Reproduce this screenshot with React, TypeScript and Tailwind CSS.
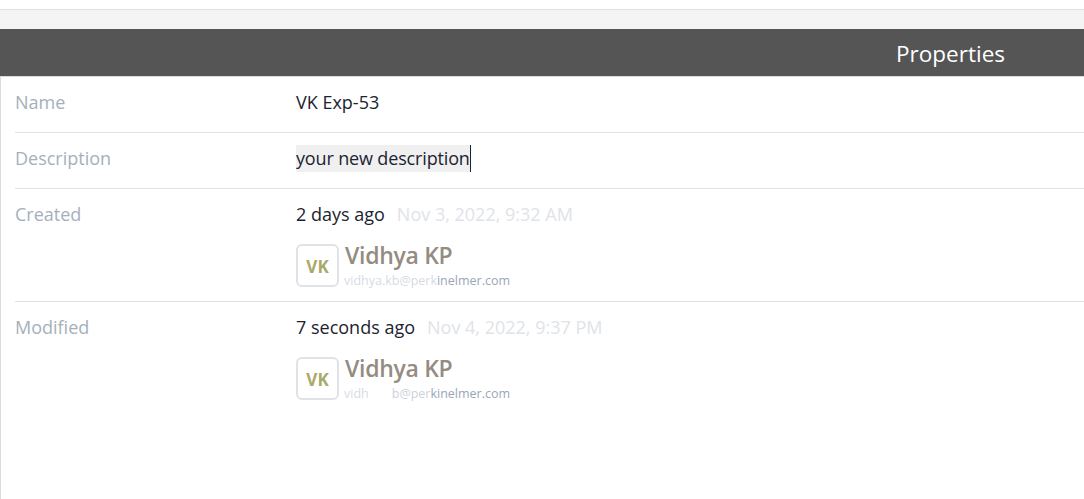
const sans = "font-['Open_Sans','Noto_Sans',sans-serif]";

function UserChip({ email }: { email: React.ReactNode }) {
  return (
    <div className="mt-[17px] flex">
      <div className="flex h-[43px] w-[43px] items-center justify-center rounded-[6px] border-2 border-[#dfe2e6] pt-[3px] text-[17px] font-bold text-[#a9a968]">
        VK
      </div>
      <div className="-mt-[2px] ml-[5px]">
        <div className="pl-[1px] text-[23px] leading-[26px] font-semibold tracking-[-0.3px] text-[#948c82]">Vidhya KP</div>
        <div className="mt-[4px] text-[12.5px] leading-[17px] text-[#9aa5b8]">{email}</div>
      </div>
    </div>
  );
}

function Row({ label, children, last }: { label: string; children: React.ReactNode; last?: boolean }) {
  return (
    <div className={last ? "flex pt-[12px]" : "flex border-b border-[#dfe2e8] pt-[12px]"}>
      <div className="w-[281px] text-[18px] leading-[26px] text-[#a5b0bb]">{label}</div>
      <div className="flex-1 text-[18px] leading-[26px] text-[#1b2430]">{children}</div>
    </div>
  );
}

export default function App() {
  return (
    <div className={`h-[499px] w-[1084px] overflow-hidden bg-white ${sans}`}>
      <div className="mt-[9px] h-[20px] border-t border-[#e0e0e0] bg-[#f4f4f4]" />
      <div className="flex h-[47px] items-center justify-end bg-[#555555] pt-[2px] pr-[79px] text-[22.5px] text-white">
        Properties
      </div>
      <div className="h-[423px] border-t border-l border-[#dcdcdc] pl-[14px]">
        <Row label="Name">
          <div className="h-[43px]">VK Exp-53</div>
        </Row>
        <Row label="Description">
          <div className="h-[43px]">
            <span className="-mt-[1px] inline-block h-[27px] border-r border-[#1b2430] bg-[#f0f0f0] tracking-[-0.15px]">your new description</span>
          </div>
        </Row>
        <Row label="Created">
          <div className="h-[100px]">
            <div className="flex gap-[12px]">
              <span>2 days ago</span>
              <span className="text-[#e0e3e8]">Nov 3, 2022, 9:32 AM</span>
            </div>
            <UserChip
              email={
                <>
                  <span className="opacity-40">vidhya.kb@perk</span>
                  <span>inelmer.com</span>
                </>
              }
            />
          </div>
        </Row>
        <Row label="Modified" last>
          <div className="flex gap-[12px]">
            <span>7 seconds ago</span>
            <span className="text-[#e0e3e8]">Nov 4, 2022, 9:37 PM</span>
          </div>
          <UserChip
            email={
              <>
                <span className="opacity-40">vidh</span>
                <span className="opacity-0">ya.k</span>
                <span className="opacity-50">b@per</span>
                <span>kinelmer.com</span>
              </>
            }
          />
        </Row>
      </div>
    </div>
  );
}
